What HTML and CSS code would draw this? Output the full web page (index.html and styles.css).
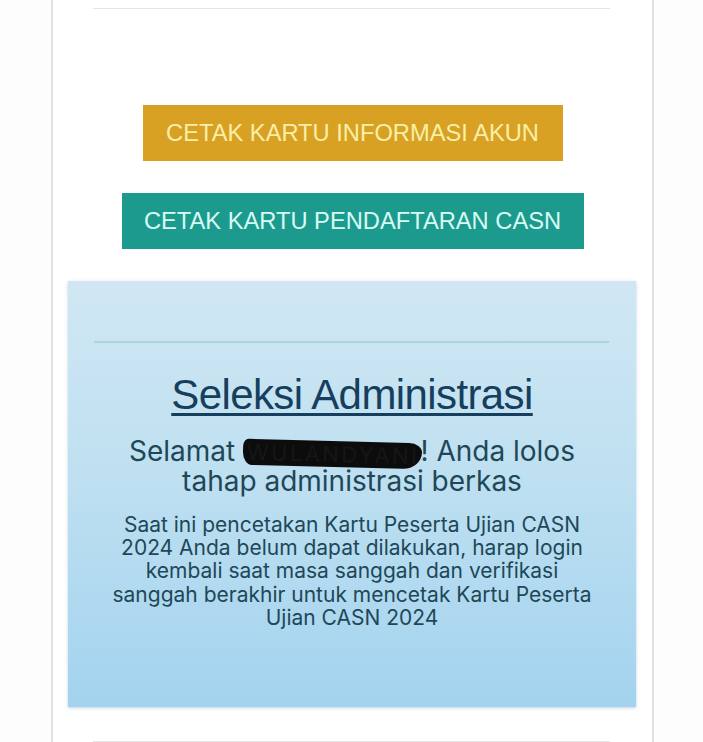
FILE: index.html
```html
<!DOCTYPE html>
<html lang="id">
<head>
<meta charset="utf-8">
<title>Seleksi Administrasi</title>
<link rel="stylesheet" href="styles.css">
</head>
<body>
<div class="frame">
  <hr class="rule top-rule">
  <div class="actions">
    <button class="btn btn-gold">CETAK KARTU INFORMASI AKUN</button>
    <button class="btn btn-teal">CETAK KARTU PENDAFTARAN CASN</button>
  </div>
  <section class="result">
    <hr class="rule inner-rule">
    <h2 class="title">Seleksi Administrasi</h2>
    <p class="greet">Selamat <span class="redact">WULANDYANI</span>! Anda lolos<br>tahap administrasi berkas</p>
    <p class="note">Saat ini pencetakan Kartu Peserta Ujian CASN 2024 Anda belum dapat dilakukan, harap login kembali saat masa sanggah dan verifikasi sanggah berakhir untuk mencetak Kartu Peserta Ujian CASN 2024</p>
  </section>
  <hr class="rule bottom-rule">
</div>
</body>
</html>
```
FILE: styles.css
```css
html, body {
  margin: 0;
  padding: 0;
  background: #fdfdfd;
}
body {
  font-family: Inter, "Liberation Sans", sans-serif;
  height: 742px;
  overflow: hidden;
}
.frame {
  margin-left: 51px;
  width: 599px;
  height: 760px;
  border-left: 2px solid #e1e1e1;
  border-right: 2px solid #e1e1e1;
  background: #fff;
  padding-top: 8px;
  box-sizing: content-box;
}
.rule {
  border: 0;
  height: 1px;
  margin: 0;
}
.top-rule, .bottom-rule {
  background: #e6e6e6;
  margin: 0 42px 0 40px;
}
.actions {
  display: flex;
  flex-direction: column;
  align-items: center;
  gap: 32px;
  padding-top: 96px;
}
.btn {
  border: 0;
  height: 56px;
  font-family: "Liberation Sans", Arial, sans-serif;
  font-size: 23.7px;
  padding: 0;
  margin: 0;
  cursor: pointer;
}
.btn-gold {
  width: 420px;
  background: #d9a124;
  color: #f8efa8;
}
.btn-teal {
  width: 462px;
  background: #1d9a8e;
  color: #d8fbf4;
}
.result {
  margin: 32px 16px 0 15px;
  height: 426px;
  background: linear-gradient(180deg, #d0e7f3 0%, #bfe0f1 45%, #a3d3ef 100%);
  box-shadow: 0 1px 3px rgba(120, 160, 190, 0.45);
  text-align: center;
  padding-top: 60px;
  box-sizing: border-box;
  color: #1e4858;
}
.inner-rule {
  background: #a7d6dd;
  height: 2px;
  margin: 0 27px 0 26px;
}
.title {
  margin: 28px 0 0;
  font-family: "Liberation Sans", Arial, sans-serif;
  font-weight: normal;
  font-size: 42px;
  letter-spacing: -0.6px;
  line-height: 48px;
  color: #163e5d;
  text-decoration: underline;
  text-decoration-thickness: 2.5px;
  text-underline-offset: 4px;
}
.greet {
  margin: 17px 0 0;
  font-size: 28px;
  line-height: 30px;
}
.redact {
  display: inline-block;
  font-size: 22px;
  line-height: 26px;
  letter-spacing: 2.4px;
  padding: 0 3px 0 4px;
  margin-right: -2px;
  color: #161616;
  background: #0c0c0c;
  border-radius: 6px 14px 20px 10px / 8px 10px 18px 14px;
  transform: rotate(1.5deg) translateY(1px);
}
.note {
  margin: 17px auto 0;
  width: 490px;
  font-size: 21px;
  line-height: 23.2px;
}
.bottom-rule {
  margin-top: 34px;
}
```
